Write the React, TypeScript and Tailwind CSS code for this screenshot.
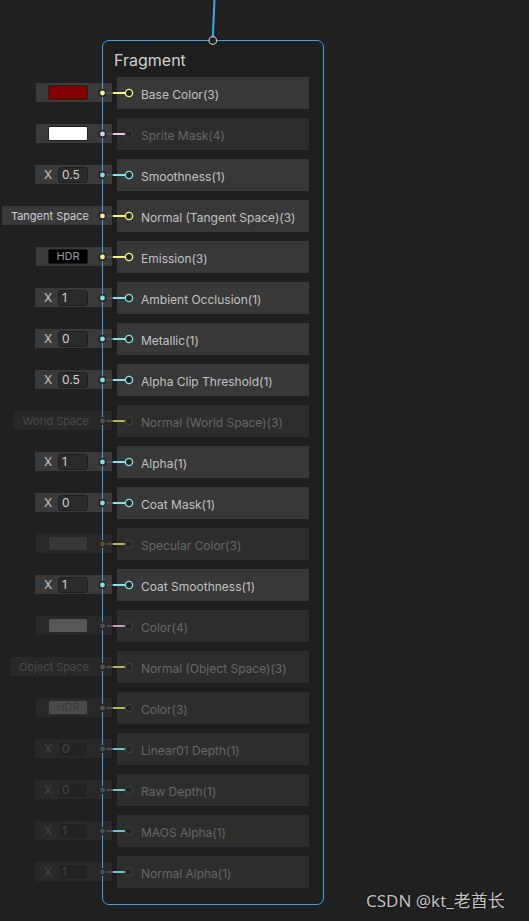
import React from 'react';

type Kind = 'v1' | 'v3' | 'v4';
type Attach =
  | { t: 'color'; c: string }
  | { t: 'x'; v: string }
  | { t: 'text'; v: string }
  | { t: 'hdr' };

type Row = {
  label: string;
  kind: Kind;
  attach: Attach;
  on: boolean; // row active
  box?: boolean; // attachment active
  dot?: boolean; // dot bright
};

const COL: Record<Kind, { on: string; dim: string; dotOff: string; ringOff: string }> = {
  v3: { on: '#f3f48a', dim: '#b6b65a', dotOff: '#55553a', ringOff: '#3f3f36' },
  v1: { on: '#84e2e6', dim: '#70c6ca', dotOff: '#3a5859', ringOff: '#36403f' },
  v4: { on: '#f2c2ec', dim: '#c59cbf', dotOff: '#5a4a57', ringOff: '#3e393d' },
};

const ROWS: Row[] = [
  { label: 'Base Color(3)', kind: 'v3', attach: { t: 'color', c: '#840000' }, on: true },
  { label: 'Sprite Mask(4)', kind: 'v4', attach: { t: 'color', c: '#ffffff' }, on: false, box: true, dot: true },
  { label: 'Smoothness(1)', kind: 'v1', attach: { t: 'x', v: '0.5' }, on: true },
  { label: 'Normal (Tangent Space)(3)', kind: 'v3', attach: { t: 'text', v: 'Tangent Space' }, on: true },
  { label: 'Emission(3)', kind: 'v3', attach: { t: 'hdr' }, on: true },
  { label: 'Ambient Occlusion(1)', kind: 'v1', attach: { t: 'x', v: '1' }, on: true },
  { label: 'Metallic(1)', kind: 'v1', attach: { t: 'x', v: '0' }, on: true },
  { label: 'Alpha Clip Threshold(1)', kind: 'v1', attach: { t: 'x', v: '0.5' }, on: true },
  { label: 'Normal (World Space)(3)', kind: 'v3', attach: { t: 'text', v: 'World Space' }, on: false },
  { label: 'Alpha(1)', kind: 'v1', attach: { t: 'x', v: '1' }, on: true },
  { label: 'Coat Mask(1)', kind: 'v1', attach: { t: 'x', v: '0' }, on: true },
  { label: 'Specular Color(3)', kind: 'v3', attach: { t: 'color', c: '#393939' }, on: false },
  { label: 'Coat Smoothness(1)', kind: 'v1', attach: { t: 'x', v: '1' }, on: true },
  { label: 'Color(4)', kind: 'v4', attach: { t: 'color', c: '#575757' }, on: false },
  { label: 'Normal (Object Space)(3)', kind: 'v3', attach: { t: 'text', v: 'Object Space' }, on: false },
  { label: 'Color(3)', kind: 'v3', attach: { t: 'hdr' }, on: false },
  { label: 'Linear01 Depth(1)', kind: 'v1', attach: { t: 'x', v: '0' }, on: false },
  { label: 'Raw Depth(1)', kind: 'v1', attach: { t: 'x', v: '0' }, on: false },
  { label: 'MAOS Alpha(1)', kind: 'v1', attach: { t: 'x', v: '1' }, on: false },
  { label: 'Normal Alpha(1)', kind: 'v1', attach: { t: 'x', v: '1' }, on: false },
];

function AttachBox({ a, active }: { a: Attach; active: boolean }) {
  const bg = active ? 'bg-[#3a3a3a]' : 'bg-[#282828]';
  const txt = active ? 'text-[#cfcfcf]' : 'text-[#4a4a4a]';
  if (a.t === 'color') {
    return (
      <div className={`absolute right-full mr-[5px] top-[6px] h-[19px] flex items-center pl-[12px] pr-[24px] ${bg}`}>
        <div
          className={`w-[40px] h-[15px] rounded-[2px] border ${active ? 'border-[#202020]' : 'border-[#262626]'}`}
          style={{ backgroundColor: a.c }}
        />
      </div>
    );
  }
  if (a.t === 'hdr') {
    return (
      <div className={`absolute right-full mr-[5px] top-[6px] h-[19px] flex items-center pl-[12px] pr-[24px] ${bg}`}>
        <div
          className={`w-[40px] h-[15px] rounded-[2px] border flex items-center justify-center text-[11px] leading-[13px] ${
            active ? 'bg-black border-[#1a1a1a] text-[#9c9c9c]' : 'bg-[#4b4b4b] border-[#2a2a2a] text-[#3b3b3b]'
          }`}
        >
          HDR
        </div>
      </div>
    );
  }
  if (a.t === 'x') {
    return (
      <div className={`absolute right-full mr-[5px] top-[6px] h-[19px] flex items-center pl-[9px] pr-[24px] ${bg}`}>
        <span className={`w-[8px] text-[12px] leading-[14px] ${active ? 'text-[#c4c4c4]' : 'text-[#444444]'}`}>X</span>
        <div
          className={`ml-[6px] w-[30px] h-[16px] rounded-[3px] border pl-[3px] text-[12px] leading-[14px] ${
            active ? 'bg-[#2a2a2a] border-[#1e1e1e] text-[#d0d0d0]' : 'bg-[#232323] border-[#2c2c2c] text-[#454545]'
          }`}
        >
          {a.v}
        </div>
      </div>
    );
  }
  return (
    <div className={`absolute right-full mr-[5px] top-[6px] h-[19px] flex items-center pl-[9px] pr-[23px] ${bg}`}>
      <span className={`text-[11px] leading-[14px] whitespace-nowrap ${txt}`}>{a.v}</span>
    </div>
  );
}

function Connector({ kind, on, dot }: { kind: Kind; on: boolean; dot: boolean }) {
  const c = COL[kind];
  const lineCol = on || dot ? c.on : c.dim;
  const dotCol = on || dot ? c.on : c.dotOff;
  return (
    <svg className="absolute left-[-20px] top-0 w-[40px] h-[32px] overflow-visible" viewBox="0 0 40 32">
      <rect x="5" y="6" width="1" height="20" fill="#3aa5e6" />
      <circle cx="5.5" cy="16" r="4" fill="#262626" />
      <circle cx="5.5" cy="16" r="2.4" fill={dotCol} />
      <line x1="9.5" y1="16" x2="16" y2="16" stroke="#4c4c4c" strokeWidth="2" />
      <line x1="16" y1="16" x2="28.5" y2="16" stroke={lineCol} strokeWidth="2" />
      <circle cx="32" cy="16" r="3.6" fill="#242424" stroke={on ? c.on : c.ringOff} strokeWidth="1.4" />
    </svg>
  );
}

function NodeRow({ r }: { r: Row }) {
  const boxActive = r.box ?? r.on;
  return (
    <div className={`relative h-[32px] w-[192px] flex items-center ${r.on ? 'bg-[#383838]' : 'bg-[#2d2d2d]'}`}>
      <AttachBox a={r.attach} active={boxActive} />
      <Connector kind={r.kind} on={r.on} dot={!!r.dot} />
      <span
        className={`pl-[24px] pt-[4px] text-[12px] leading-[14px] whitespace-nowrap ${
          r.on ? 'text-[#c2c2c2]' : 'text-[#676767]'
        }`}
      >
        {r.label}
      </span>
    </div>
  );
}

export default function App() {
  return (
    <div className="relative w-[529px] h-[921px] overflow-hidden bg-[#202020] font-['Inter','Noto_Sans',sans-serif]">
      <div className="relative ml-[102px] mt-[40px] w-[222px] h-[865px] rounded-[7px] border border-[#3aa5e6] bg-[#1e1e1e] flex flex-col">
        <div className="h-[36px] pl-[11px] pt-[9px] text-[16px] leading-[20px] text-[#d0d0d0]">Fragment</div>
        <div className="flex flex-col gap-[9px] px-[14px]">
          {ROWS.map((r) => (
            <NodeRow key={r.label} r={r} />
          ))}
        </div>
      </div>

      <svg className="absolute left-0 top-0 w-[529px] h-[46px] pointer-events-none" viewBox="0 0 529 46">
        <line x1="214.5" y1="0" x2="212.8" y2="36.5" stroke="#3aa5e6" strokeWidth="2" />
        <circle cx="212.8" cy="40.5" r="3.8" fill="#1e1e1e" stroke="#c4c4c4" strokeWidth="1.2" />
      </svg>

      <div className="absolute left-[366px] top-[891px] text-[17px] leading-[20px] text-[#c2c2c2] whitespace-nowrap font-['Noto_Sans','Noto_Sans_CJK_SC',sans-serif] [text-shadow:0_0_2px_#000]">
        CSDN @kt_老酋长
      </div>
    </div>
  );
}
